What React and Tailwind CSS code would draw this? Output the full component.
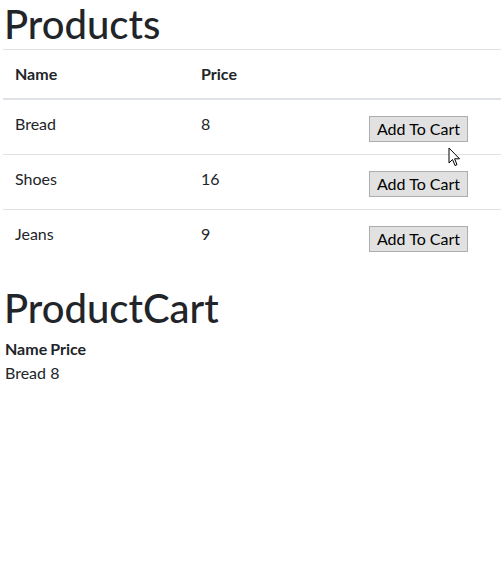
import React from "react";

const products = [
  { name: "Bread", price: 8 },
  { name: "Shoes", price: 16 },
  { name: "Jeans", price: 9 },
];

const cart = [{ name: "Bread", price: 8 }];

function Cursor() {
  return (
    <svg
      className="pointer-events-none absolute left-[448px] top-[147px]"
      width="14"
      height="21"
      viewBox="0 0 14 21"
    >
      <path
        d="M1 1 L1 16 L4.5 12.5 L7 18.5 L9 17.7 L6.6 11.8 L11.5 11.8 Z"
        fill="#fff"
        stroke="#000"
        strokeWidth="1"
        strokeLinejoin="round"
      />
    </svg>
  );
}

export default function App() {
  return (
    <div className="relative min-h-[563px] overflow-hidden bg-white pt-[3px] pl-[3px] font-['Lato','Open_Sans',sans-serif] text-[#212529]">
      <h1 className="-mt-[3px] mb-[1px] pl-[1px] text-[40px] leading-[48px] font-medium">Products</h1>

      <table className="w-full border-collapse text-[16px] leading-6">
        <thead>
          <tr>
            <th className="w-[186px] border-t border-b-2 border-[#dee2e6] px-3 py-3 text-left font-bold">
              Name
            </th>
            <th className="w-[168px] border-t border-b-2 border-[#dee2e6] px-3 py-3 text-left font-bold">
              Price
            </th>
            <th className="border-t border-b-2 border-[#dee2e6] px-3 py-3"></th>
          </tr>
        </thead>
        <tbody>
          {products.map((p) => (
            <tr key={p.name}>
              <td className="border-t border-[#dee2e6] px-3 py-3 align-top">{p.name}</td>
              <td className="border-t border-[#dee2e6] px-3 py-3 align-top">{p.price}</td>
              <td className="border-t border-[#dee2e6] px-3 py-3 align-top">
                <button className="mt-1 block h-[26px] w-[99px] border border-[#adadad] bg-[#e1e1e1] px-[6px] text-[16px] leading-[22px] text-black">
                  Add To Cart
                </button>
              </td>
            </tr>
          ))}
        </tbody>
      </table>

      <h1 className="mt-[20px] mb-[4px] pl-[1px] text-[40px] leading-[48px] font-medium">ProductCart</h1>

      <table className="mt-[1px] border-separate border-spacing-[2px] text-[16px] leading-[22px]">
        <thead>
          <tr>
            <th className="p-0 pr-[1px] text-left font-bold">Name</th>
            <th className="p-0 text-left font-bold">Price</th>
          </tr>
        </thead>
        <tbody>
          {cart.map((c) => (
            <tr key={c.name}>
              <td className="p-0">{c.name}</td>
              <td className="p-0">{c.price}</td>
            </tr>
          ))}
        </tbody>
      </table>

      <Cursor />
    </div>
  );
}
